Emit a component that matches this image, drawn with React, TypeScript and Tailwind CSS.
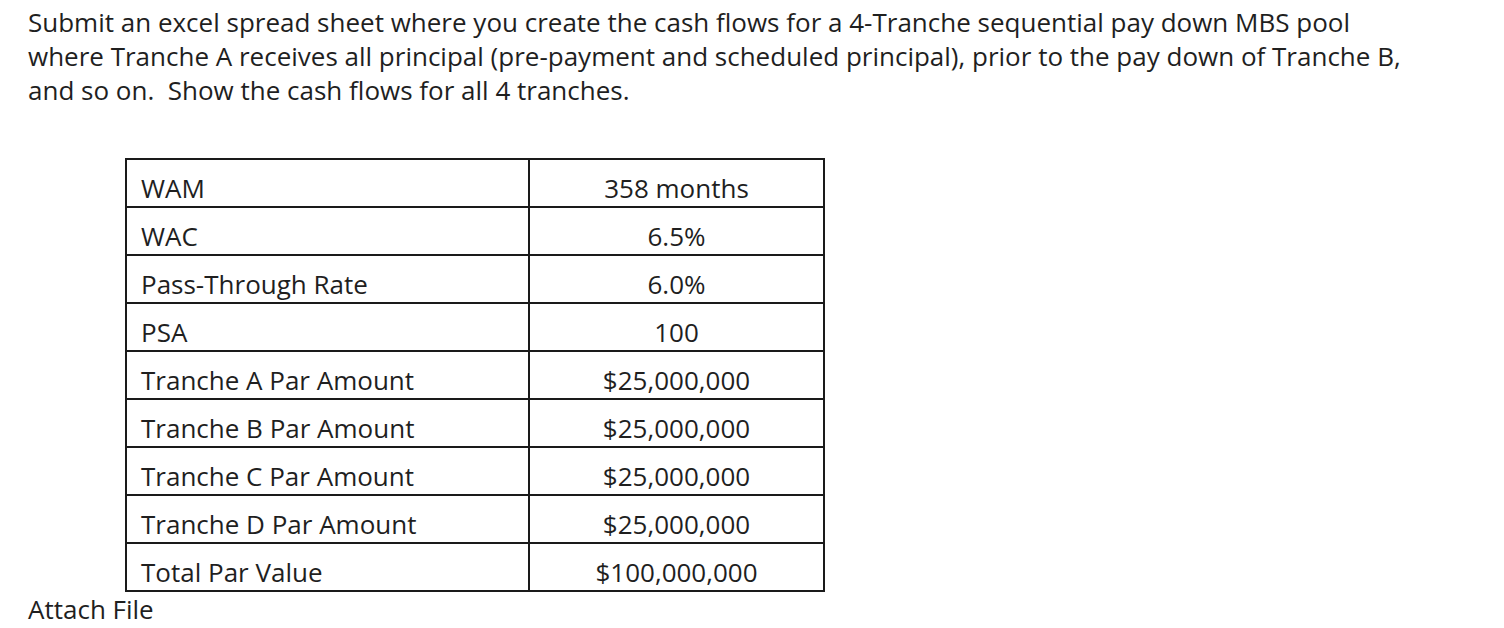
const rows: [string, string][] = [
  ['WAM', '358 months'],
  ['WAC', '6.5%'],
  ['Pass-Through Rate', '6.0%'],
  ['PSA', '100'],
  ['Tranche A Par Amount', '$25,000,000'],
  ['Tranche B Par Amount', '$25,000,000'],
  ['Tranche C Par Amount', '$25,000,000'],
  ['Tranche D Par Amount', '$25,000,000'],
  ['Total Par Value', '$100,000,000']
];

const App = () => {
  return (
    <div className="w-[1504px] h-[628px] bg-white text-[#1f1f1f] font-['Open_Sans',sans-serif] pl-[28px] pt-[5px]">
      <p className="text-[26px] leading-[34px] w-[1450px]">
        Submit an excel spread sheet where you create the cash flows for a 4-Tranche sequential pay down MBS pool
        <br />
        where Tranche A receives all principal (pre-payment and scheduled principal), prior to the pay down of Tranche B,
        <br />
        and so on.&nbsp; Show the cash flows for all 4 tranches.
      </p>
      <table className="ml-[97px] mt-[51px] border-collapse border-2 border-[#1a1a1a] text-[26px]">
        <tbody>
          {rows.map(([label, value]) => (
            <tr key={label} className="h-[48px]">
              <td className="w-[403px] border-2 border-[#1a1a1a] pl-[14px] pt-[9px] leading-[34px] align-middle">
                {label}
              </td>
              <td className="w-[295px] border-2 border-[#1a1a1a] text-center pt-[9px] leading-[34px] align-middle">
                {value}
              </td>
            </tr>
          ))}
        </tbody>
      </table>
      <div className="text-[26px] leading-[34px]">Attach File</div>
    </div>
  );
};

export default App;
